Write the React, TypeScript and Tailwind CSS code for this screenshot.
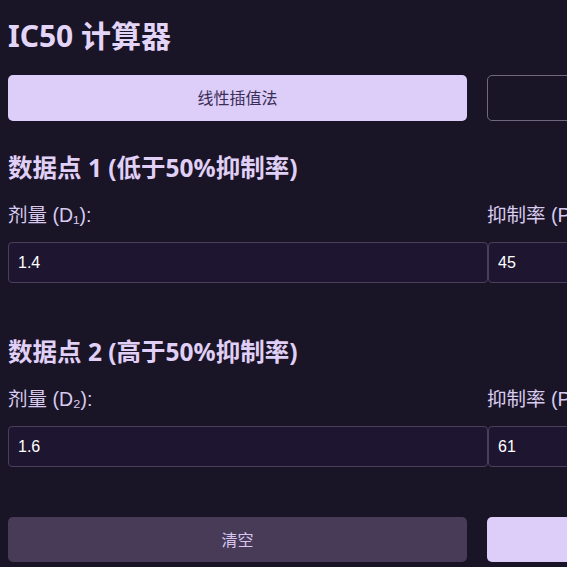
import { useState } from "react";

const font = { fontFamily: '"Noto Sans", "Noto Sans CJK SC", sans-serif' };

function DataPoint({ n, hint, dose, rate, onDose, onRate }: {
  n: number; hint: string; dose: string; rate: string;
  onDose: (v: string) => void; onRate: (v: string) => void;
}) {
  const sub = n === 1 ? "₁" : "₂";
  return (
    <div>
      <h2 className="text-[24.5px] font-bold leading-[30px] text-[#e0d0f7]">
        数据点 {n} ({hint}50%抑制率)
      </h2>
      <div className="grid grid-cols-[480px_480px] mt-[19px]">
        <div>
          <label className="block text-[19.5px] leading-[26px] text-[#d9cbef] font-['Liberation_Sans','Noto_Sans_CJK_SC',sans-serif]">剂量 (D{sub}):</label>
          <input
            value={dose}
            onChange={e => onDose(e.target.value)}
            className="mt-[14px] w-full h-[41px] px-[9px] bg-[#1e1530] border border-[#4a3f5c] rounded-[4px] text-[16px] text-white outline-none font-['Liberation_Sans',sans-serif]"
          />
        </div>
        <div>
          <label className="block text-[19.5px] leading-[26px] text-[#d9cbef] font-['Liberation_Sans','Noto_Sans_CJK_SC',sans-serif] -ml-px">抑制率 (P{sub}):</label>
          <input
            value={rate}
            onChange={e => onRate(e.target.value)}
            className="mt-[14px] w-full h-[41px] px-[9px] bg-[#1e1530] border border-[#4a3f5c] rounded-[4px] text-[16px] text-white outline-none font-['Liberation_Sans',sans-serif]"
          />
        </div>
      </div>
    </div>
  );
}

export default function App() {
  const [d1, setD1] = useState("1.4");
  const [p1, setP1] = useState("45");
  const [d2, setD2] = useState("1.6");
  const [p2, setP2] = useState("61");

  return (
    <div className="w-[567px] h-[567px] overflow-hidden bg-[#1a1526]" style={font}>
      <div className="w-[968px] pl-2 pt-[15px]">
        <h1 className="text-[30px] font-bold leading-[42px] text-[#e3d5f8]">IC50 计算器</h1>

        <div className="flex gap-5 mt-[18px]">
          <button className="w-[459px] h-[46px] rounded-[5px] bg-[#ddcdf9] text-[16px] text-[#3b2d55]">线性插值法</button>
          <button className="w-[459px] h-[46px] rounded-[5px] border border-[#6f6880] text-[16px] text-[#ddcdf9]">对数插值法</button>
        </div>

        <div className="mt-[32px]">
          <DataPoint n={1} hint="低于" dose={d1} rate={p1} onDose={setD1} onRate={setP1} />
        </div>
        <div className="mt-[54px]">
          <DataPoint n={2} hint="高于" dose={d2} rate={p2} onDose={setD2} onRate={setP2} />
        </div>

        <div className="flex gap-5 mt-[50px]">
          <button
            onClick={() => { setD1(""); setP1(""); setD2(""); setP2(""); }}
            className="w-[459px] h-[45px] rounded-[5px] bg-[#473b57] text-[16px] text-[#d8c6f0]"
          >清空</button>
          <button className="w-[459px] h-[45px] rounded-[5px] bg-[#ddcdf9] text-[16px] text-[#3b2d55]">计算 IC50</button>
        </div>
      </div>
    </div>
  );
}
